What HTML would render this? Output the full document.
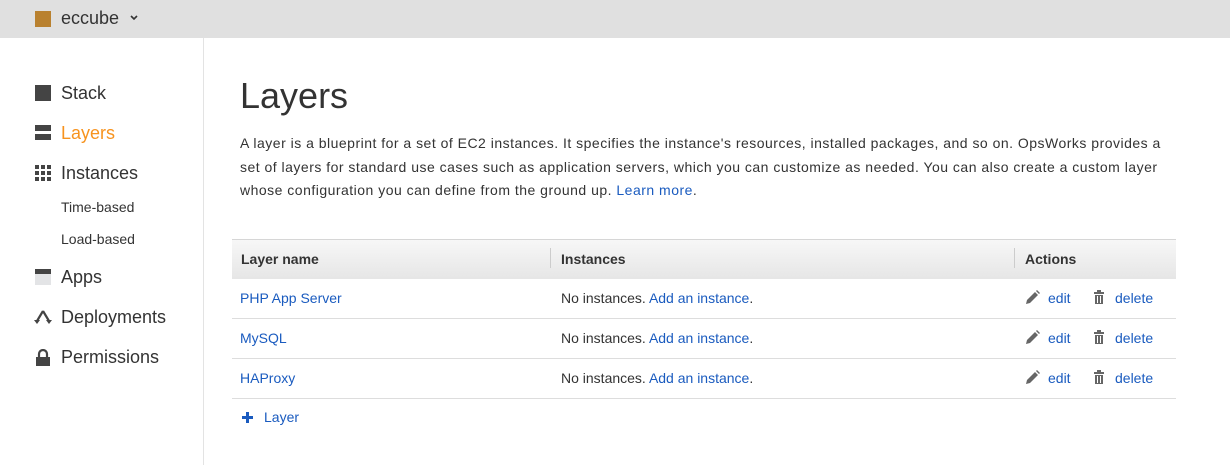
<!DOCTYPE html><html><head><style>
body{margin:0;width:1230px;height:465px;overflow:hidden;font-family:"Liberation Sans",sans-serif;background:#fff;color:#333;position:relative}
.top{position:absolute;left:0;top:0;width:1230px;height:38px;background:#e0e0e0}
.a{position:absolute;white-space:nowrap}
a,.l{color:#1a5bbf;text-decoration:none}
.nav{font-size:18px;color:#333}
.sb{position:absolute;left:203px;top:38px;width:1px;height:427px;background:#e3e3e3}
.hl{position:absolute;left:232px;width:944px;height:1px;background:#ddd}
.t{font-size:14px}
</style></head><body>
<div class="top"></div>
<div class="a" style="left:35px;top:11px;width:16px;height:16px;background:#b9812f"></div>
<div class="a" style="left:61px;top:8px;font-size:18px;color:#333">eccube</div>
<svg class="a" style="left:130px;top:15px" width="8" height="6"><path d="M1 1l3 3 3-3" stroke="#333" stroke-width="1.6" fill="none"/></svg>
<div class="sb"></div>
<div class="a" style="left:35px;top:85px;width:16px;height:16px;background:#444"></div>
<div class="a nav" style="left:61px;top:83px">Stack</div>
<div class="a" style="left:35px;top:125px;width:16px;height:6px;background:#444"></div>
<div class="a" style="left:35px;top:134px;width:16px;height:6px;background:#444"></div>
<div class="a nav" style="left:61px;top:123px;color:#f7931e">Layers</div>
<svg class="a" style="left:35px;top:165px" width="16" height="16" fill="#444"><rect x="0" y="0" width="4" height="4"/><rect x="6" y="0" width="4" height="4"/><rect x="12" y="0" width="4" height="4"/><rect x="0" y="6" width="4" height="4"/><rect x="6" y="6" width="4" height="4"/><rect x="12" y="6" width="4" height="4"/><rect x="0" y="12" width="4" height="4"/><rect x="6" y="12" width="4" height="4"/><rect x="12" y="12" width="4" height="4"/></svg>
<div class="a nav" style="left:61px;top:163px">Instances</div>
<div class="a" style="left:61px;top:199px;font-size:14px">Time-based</div>
<div class="a" style="left:61px;top:231px;font-size:14px">Load-based</div>
<div class="a" style="left:35px;top:269px;width:16px;height:16px;background:#e3e4e6"></div>
<div class="a" style="left:35px;top:269px;width:16px;height:5px;background:#444"></div>
<div class="a nav" style="left:61px;top:267px">Apps</div>
<svg class="a" style="left:34px;top:309px" width="18" height="17"><path d="M9 2L3 12M9 2l6 10" stroke="#444" stroke-width="2.2" fill="none"/><path d="M0 11h6l-3 4zM12 11h6l-3 4z" fill="#444"/></svg>
<div class="a nav" style="left:61px;top:307px">Deployments</div>
<svg class="a" style="left:35px;top:349px" width="16" height="17"><path d="M4 8V5a4 4 0 0 1 8 0v3" stroke="#444" stroke-width="2.2" fill="none"/><rect x="1" y="8" width="14" height="9" fill="#444"/></svg>
<div class="a nav" style="left:61px;top:347px">Permissions</div>
<div class="a" style="left:240px;top:75px;font-size:36px;color:#333">Layers</div>
<div class="a" style="left:240px;top:132px;font-size:14px;line-height:23.5px;letter-spacing:0.49px">A layer is a blueprint for a set of EC2 instances. It specifies the instance's resources, installed packages, and so on. OpsWorks provides a<br>set of layers for standard use cases such as application servers, which you can customize as needed. You can also create a custom layer<br>whose configuration you can define from the ground up. <a>Learn more</a>.</div>
<div class="a" style="left:232px;top:239px;width:944px;height:39px;background:linear-gradient(#f7f7f7,#e6e6e6);border-top:1px solid #d6d6d6"></div>
<div class="a" style="left:550px;top:248px;width:1px;height:20px;background:#ccc"></div>
<div class="a" style="left:1014px;top:248px;width:1px;height:20px;background:#ccc"></div>
<div class="a t" style="left:241px;top:251px;font-weight:bold">Layer name</div>
<div class="a t" style="left:561px;top:251px;font-weight:bold">Instances</div>
<div class="a t" style="left:1025px;top:251px;font-weight:bold">Actions</div>
<div class="hl" style="top:318px"></div><div class="hl" style="top:358px"></div><div class="hl" style="top:398px"></div>
<div class="a t l" style="left:240px;top:290px">PHP App Server</div>
<div class="a t l" style="left:240px;top:330px">MySQL</div>
<div class="a t l" style="left:240px;top:370px">HAProxy</div>
<div class="a t" style="left:561px;top:290px">No instances. <a>Add an instance</a>.</div>
<div class="a t" style="left:561px;top:330px">No instances. <a>Add an instance</a>.</div>
<div class="a t" style="left:561px;top:370px">No instances. <a>Add an instance</a>.</div>
<svg class="a" style="left:1024px;top:289px" width="150" height="100">
<g fill="#666">
<g id="r"><path d="M2 15l1-4 8-8 3 3-8 8z M12 2l1-1 3 3-1 1z"/><rect x="70" y="3" width="10" height="2"/><rect x="73" y="1" width="4" height="2"/><path d="M71 6h8v9h-8z M73 7v7h1V7z M76 7v7h1V7z" fill-rule="evenodd"/></g>
<use href="#r" y="40"/><use href="#r" y="80"/></g>
<g font-family="Liberation Sans" font-size="14" fill="#1a5bbf"><text x="24" y="14">edit</text><text x="91" y="14">delete</text><text x="24" y="54">edit</text><text x="91" y="54">delete</text><text x="24" y="94">edit</text><text x="91" y="94">delete</text></g>
</svg>
<svg class="a" style="left:241px;top:411px" width="13" height="13"><path d="M6.5 1v11M1 6.5h11" stroke="#1a5bbf" stroke-width="3"/></svg>
<div class="a t l" style="left:264px;top:409px">Layer</div>
</body></html>
